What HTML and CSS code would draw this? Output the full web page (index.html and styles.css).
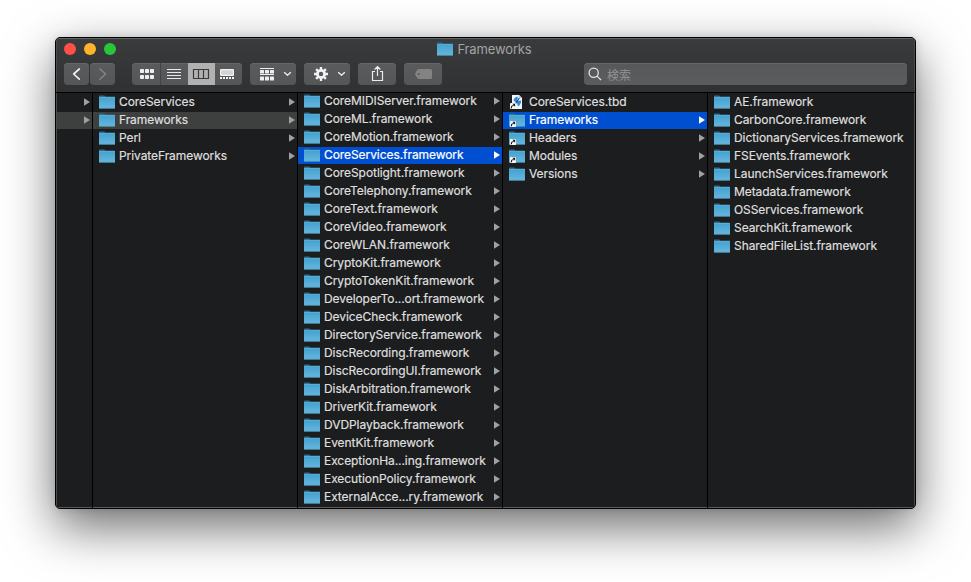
FILE: index.html
```html
<!DOCTYPE html>
<html lang="ja">
<head>
<meta charset="utf-8">
<title>Frameworks</title>
<link rel="stylesheet" href="styles.css">
</head>
<body>
<svg class="defs" aria-hidden="true">
  <defs>
    <linearGradient id="blue" x1="0" y1="0" x2="0" y2="1"><stop offset="0" stop-color="#43a1d0"/><stop offset="1" stop-color="#68b7dd"/></linearGradient>
    <symbol id="folder" viewBox="0 0 16 14">
      <path d="M0 1.2Q0 .4.8.4H5.2L6.6 1.4H15.4Q16 1.4 16 2V4H0Z" fill="#2e718e"/>
      <rect y="2.2" width="16" height="11.4" rx=".4" fill="url(#blue)"/>
      <path d="M0 2.5H16" stroke="#6cbce0" stroke-width=".6"/>
      <path d="M0 13.3H16" stroke="#478eae" stroke-width=".6"/>
    </symbol>
    <symbol id="alias" viewBox="0 0 7 7">
      <rect width="7" height="7" rx=".8" fill="#f4f4f4"/>
      <path d="M1.7 6V4.8Q1.7 3.2 4.3 2.9" fill="none" stroke="#111" stroke-width="1.3"/><path d="M2.8 1H6V4.3Z" fill="#111"/>
    </symbol>
    <symbol id="tri" viewBox="0 0 6 8"><path d="M0 .2L6 4L0 7.8Z" fill="currentColor"/></symbol>
    <symbol id="chev" viewBox="0 0 8 5"><path d="M1 .9L4 3.8L7 .9" fill="none" stroke="#e7e7e7" stroke-width="1.4" stroke-linecap="round" stroke-linejoin="round"/></symbol>
  </defs>
</svg>
<main class="window">
  <header class="chrome">
    <div class="titlebar">
      <div class="lights"><i class="red"></i><i class="yellow"></i><i class="green"></i></div>
      <div class="title"><svg class="folder"><use href="#folder"/></svg><span>Frameworks</span></div>
    </div>
    <div class="toolbar">
      <div class="nav">
        <button class="btn"><svg width="25" height="22"><path d="M15.3 6L9.7 11L15.3 16.2" fill="none" stroke="#f0f0f0" stroke-width="1.7" stroke-linecap="round" stroke-linejoin="round"/></svg></button>
        <button class="btn"><svg width="25" height="22"><path d="M10 6L15.6 11L10 16.2" fill="none" stroke="#858687" stroke-width="1.4" stroke-linecap="round" stroke-linejoin="round"/></svg></button>
      </div>
      <div class="views btn">
        <span class="seg sep"><svg width="28" height="22" fill="#efefef"><rect x="8" y="6" width="4" height="4" rx=".8"/><rect x="13" y="6" width="4" height="4" rx=".8"/><rect x="18" y="6" width="4" height="4" rx=".8"/><rect x="8" y="12" width="4" height="4" rx=".8"/><rect x="13" y="12" width="4" height="4" rx=".8"/><rect x="18" y="12" width="4" height="4" rx=".8"/></svg></span>
        <span class="seg"><svg width="27" height="22"><path d="M6 6.5H20M6 9.5H20M6 12.5H20M6 15.5H20" stroke="#e8e8e8"/></svg></span>
        <span class="seg on"><svg width="27" height="22"><path d="M5.5 6.5H20.5V15.5H5.5ZM10.5 6.5V15.5M15.5 6.5V15.5" fill="none" stroke="#3a3a3b" stroke-width="1.2"/></svg></span>
        <span class="seg"><svg width="27" height="22"><rect x="5.6" y="6.6" width="12.8" height="5.8" rx=".6" fill="#d2d2d2" stroke="#f3f3f3" stroke-width="1.2"/><path d="M5 15H19" stroke="#f3f3f3" stroke-width="2" stroke-dasharray="2 1"/></svg></span>
      </div>
      <button class="btn menu"><svg width="46" height="22"><path d="M10 5.5H24M10 11.5H24" stroke="#eee"/><g fill="#eee"><rect x="10" y="7" width="4" height="3.5" rx=".6"/><rect x="15" y="7" width="4" height="3.5" rx=".6"/><rect x="20" y="7" width="4" height="3.5" rx=".6"/><rect x="10" y="13.5" width="4" height="4" rx=".6"/><rect x="15" y="13.5" width="4" height="4" rx=".6"/><rect x="20" y="13.5" width="4" height="4" rx=".6"/></g><use href="#chev" x="33.5" y="8.5" width="8" height="5"/></svg></button>
      <button class="btn menu"><svg width="46" height="22"><g transform="translate(17 11)" fill="none" stroke="#f2f2f2"><circle r="3.6" stroke-width="2.8"/><path d="M0-7V-4M0 7V4M-7 0H-4M7 0H4M-4.9-4.9L-3-3M4.9 4.9L3 3M-4.9 4.9L-3 3M4.9-4.9L3-3" stroke-width="2.4"/></g><use href="#chev" x="33.5" y="8.5" width="8" height="5"/></svg></button>
      <button class="btn single"><svg width="38" height="22" fill="none" stroke="#ececec" stroke-width="1.2"><path d="M17 8.5H14.5V17.5H24.5V8.5H22M19.5 13V3.8M16.6 6.5L19.5 3.6L22.4 6.5"/></svg></button>
      <button class="btn single"><svg width="38" height="22"><path fill-rule="evenodd" d="M15.2 6H26.5Q28 6 28 7.5V14.5Q28 16 26.5 16H15.2Q14 16 13.2 15L11.4 12Q10.8 11 11.4 10L13.2 7Q14 6 15.2 6ZM14.7 9.9A1.1 1.1 0 1 0 14.7 12.1A1.1 1.1 0 1 0 14.7 9.9Z" fill="#838384"/></svg></button>
      <div class="search"><svg width="14" height="14" fill="none" stroke="#e3e3e3" stroke-width="1.3"><circle cx="5.7" cy="5.7" r="4.6"/><path d="M9.1 9.1L13 13"/></svg><span>検索</span></div>
    </div>
  </header>
  <section class="columns">
    <ul class="col c0">
      <li><svg class="tri"><use href="#tri"/></svg></li>
      <li class="path"><svg class="tri"><use href="#tri"/></svg></li>
    </ul>
    <ul class="col c1">
      <li><svg class="folder"><use href="#folder"/></svg><span>CoreServices</span><svg class="tri"><use href="#tri"/></svg></li>
      <li class="path"><svg class="folder"><use href="#folder"/></svg><span>Frameworks</span><svg class="tri"><use href="#tri"/></svg></li>
      <li><svg class="folder"><use href="#folder"/></svg><span>Perl</span><svg class="tri"><use href="#tri"/></svg></li>
      <li><svg class="folder"><use href="#folder"/></svg><span>PrivateFrameworks</span><svg class="tri"><use href="#tri"/></svg></li>
    </ul>
    <ul class="col c2">
      <li><svg class="folder"><use href="#folder"/></svg><span>CoreMIDIServer.framework</span><svg class="tri"><use href="#tri"/></svg></li>
      <li><svg class="folder"><use href="#folder"/></svg><span>CoreML.framework</span><svg class="tri"><use href="#tri"/></svg></li>
      <li><svg class="folder"><use href="#folder"/></svg><span>CoreMotion.framework</span><svg class="tri"><use href="#tri"/></svg></li>
      <li class="sel"><svg class="folder"><use href="#folder"/></svg><span>CoreServices.framework</span><svg class="tri"><use href="#tri"/></svg></li>
      <li><svg class="folder"><use href="#folder"/></svg><span>CoreSpotlight.framework</span><svg class="tri"><use href="#tri"/></svg></li>
      <li><svg class="folder"><use href="#folder"/></svg><span>CoreTelephony.framework</span><svg class="tri"><use href="#tri"/></svg></li>
      <li><svg class="folder"><use href="#folder"/></svg><span>CoreText.framework</span><svg class="tri"><use href="#tri"/></svg></li>
      <li><svg class="folder"><use href="#folder"/></svg><span>CoreVideo.framework</span><svg class="tri"><use href="#tri"/></svg></li>
      <li><svg class="folder"><use href="#folder"/></svg><span>CoreWLAN.framework</span><svg class="tri"><use href="#tri"/></svg></li>
      <li><svg class="folder"><use href="#folder"/></svg><span>CryptoKit.framework</span><svg class="tri"><use href="#tri"/></svg></li>
      <li><svg class="folder"><use href="#folder"/></svg><span>CryptoTokenKit.framework</span><svg class="tri"><use href="#tri"/></svg></li>
      <li><svg class="folder"><use href="#folder"/></svg><span>DeveloperTo...ort.framework</span><svg class="tri"><use href="#tri"/></svg></li>
      <li><svg class="folder"><use href="#folder"/></svg><span>DeviceCheck.framework</span><svg class="tri"><use href="#tri"/></svg></li>
      <li><svg class="folder"><use href="#folder"/></svg><span>DirectoryService.framework</span><svg class="tri"><use href="#tri"/></svg></li>
      <li><svg class="folder"><use href="#folder"/></svg><span>DiscRecording.framework</span><svg class="tri"><use href="#tri"/></svg></li>
      <li><svg class="folder"><use href="#folder"/></svg><span>DiscRecordingUI.framework</span><svg class="tri"><use href="#tri"/></svg></li>
      <li><svg class="folder"><use href="#folder"/></svg><span>DiskArbitration.framework</span><svg class="tri"><use href="#tri"/></svg></li>
      <li><svg class="folder"><use href="#folder"/></svg><span>DriverKit.framework</span><svg class="tri"><use href="#tri"/></svg></li>
      <li><svg class="folder"><use href="#folder"/></svg><span>DVDPlayback.framework</span><svg class="tri"><use href="#tri"/></svg></li>
      <li><svg class="folder"><use href="#folder"/></svg><span>EventKit.framework</span><svg class="tri"><use href="#tri"/></svg></li>
      <li><svg class="folder"><use href="#folder"/></svg><span>ExceptionHa...ing.framework</span><svg class="tri"><use href="#tri"/></svg></li>
      <li><svg class="folder"><use href="#folder"/></svg><span>ExecutionPolicy.framework</span><svg class="tri"><use href="#tri"/></svg></li>
      <li><svg class="folder"><use href="#folder"/></svg><span>ExternalAcce...ry.framework</span><svg class="tri"><use href="#tri"/></svg></li>
    </ul>
    <ul class="col c3">
      <li><svg class="folder" viewBox="0 0 16 14"><path d="M3 0H10L13 3V14H3Z" fill="#f3f6f8"/><path d="M10 0V3H13Z" fill="#b9c3ca"/><path d="M4.5 5.5Q5 2 9 1.5L8 6L12 5.5Q12.5 9 9 11.5L8 8Z" fill="#2b8be0"/><path d="M10.3 3L6 9.5" stroke="#1c3f6b" stroke-width="1.1"/><use href="#alias" x="1" y="8" width="6" height="6"/></svg><span>CoreServices.tbd</span></li>
      <li class="sel"><svg class="folder" viewBox="0 0 16 14"><use href="#folder" width="16" height="14"/><use href="#alias" x="1" y="8" width="6" height="6"/></svg><span>Frameworks</span><svg class="tri"><use href="#tri"/></svg></li>
      <li><svg class="folder" viewBox="0 0 16 14"><use href="#folder" width="16" height="14"/><use href="#alias" x="1" y="8" width="6" height="6"/></svg><span>Headers</span><svg class="tri"><use href="#tri"/></svg></li>
      <li><svg class="folder" viewBox="0 0 16 14"><use href="#folder" width="16" height="14"/><use href="#alias" x="1" y="8" width="6" height="6"/></svg><span>Modules</span><svg class="tri"><use href="#tri"/></svg></li>
      <li><svg class="folder"><use href="#folder"/></svg><span>Versions</span><svg class="tri"><use href="#tri"/></svg></li>
    </ul>
    <ul class="col c4">
      <li><svg class="folder"><use href="#folder"/></svg><span>AE.framework</span></li>
      <li><svg class="folder"><use href="#folder"/></svg><span>CarbonCore.framework</span></li>
      <li><svg class="folder"><use href="#folder"/></svg><span>DictionaryServices.framework</span></li>
      <li><svg class="folder"><use href="#folder"/></svg><span>FSEvents.framework</span></li>
      <li><svg class="folder"><use href="#folder"/></svg><span>LaunchServices.framework</span></li>
      <li><svg class="folder"><use href="#folder"/></svg><span>Metadata.framework</span></li>
      <li><svg class="folder"><use href="#folder"/></svg><span>OSServices.framework</span></li>
      <li><svg class="folder"><use href="#folder"/></svg><span>SearchKit.framework</span></li>
      <li><svg class="folder"><use href="#folder"/></svg><span>SharedFileList.framework</span></li>
    </ul>
  </section>
</main>
</body>
</html>
```
FILE: styles.css
```css
* { box-sizing: border-box; }
html, body { margin: 0; height: 100%; overflow: hidden; background: #fff; }
body { padding: 37px 55px; font-family: Inter, "Noto Sans CJK JP", sans-serif; font-size: 12px; color: #dfdfdf; }
.defs { position: absolute; width: 0; height: 0; }
svg { display: block; flex: none; }

.window {
  width: 861px;
  height: 472px;
  border: 1px solid #000;
  border-radius: 5px;
  overflow: hidden;
  background: #1c1d1e;
  box-shadow: 0 18px 50px rgba(0, 0, 0, .58), 0 0 10px rgba(0, 0, 0, .12);
  display: flex;
  flex-direction: column;
}
.chrome {
  height: 55px;
  flex: none;
  background: linear-gradient(#3a3b3c, #303132);
  border-bottom: 1px solid #000;
  box-shadow: inset 0 1px #626364, inset 1px 0 #4b4c4d, inset -1px 0 #4b4c4d;
}
.titlebar { height: 25px; display: grid; grid-template-columns: 1fr auto 1fr; align-items: center; padding: 0 10px 0 8px; }
.lights { display: flex; gap: 8px; margin-top: -3px; }
.lights i { width: 12px; height: 12px; border-radius: 50%; }
.red { background: #fe4f49; }
.yellow { background: #fdb42b; }
.green { background: #27c739; }
.title { display: flex; align-items: center; gap: 4px; color: #a4a5a6; font-size: 13px; letter-spacing: -.13px; margin-top: -4px; }
.toolbar { display: flex; padding: 0 8px; }
.btn { height: 22px; padding: 0; border: 0; border-radius: 4px; background: linear-gradient(#5a5b5c, #555657); box-shadow: inset 0 1px #656667; display: block; flex: none; overflow: hidden; }
.nav { display: flex; gap: 1px; margin-right: 17px; }
.views { display: flex; width: 110px; margin-right: 8px; }
.seg { width: 27px; height: 22px; flex: none; }
.seg.sep { width: 29px; border-right: 1px solid #434445; }
.seg.on { background: #b1b1b2; }
.menu { width: 46px; margin-right: 8px; }
.single { width: 38px; margin-right: 8px; }
.search { margin-left: 134px; flex: 1; height: 22px; border-radius: 4px; background: linear-gradient(#575859, #5b5c5d); box-shadow: inset 0 1px #666768; display: flex; align-items: center; padding-left: 4px; gap: 5px; color: #919293; }

.columns { flex: 1; display: flex; min-height: 0; box-shadow: inset 1px 0 #4b4c4d, inset -1px 0 #4b4c4d, inset 0 -1px #58595a; }
.col { list-style: none; margin: 0; padding: 1px 0 0; border-right: 1px solid #000; flex: none; overflow: hidden; }
.c0 { width: 37px; padding-left: 1px; }
.c1, .c2, .c3 { width: 205px; }
.c2 { padding-top: 0; }
.c4 { flex: 1; border: 0; }
.col li { height: 17px; margin-bottom: 1px; padding: 0 2px 0 6px; display: flex; align-items: center; }
.c0 li, .c1 li, .c3 li, .c4 li { position: static; }
.col span { margin: -2px 0 0 4px; line-height: 17px; white-space: nowrap; letter-spacing: -.07px; -webkit-text-stroke: .2px currentColor; }
.folder { width: 16px; height: 14px; }
.col .folder { margin-top: -1px; }
.tri { width: 6px; height: 8px; margin: -1px 0 0 auto; color: #a0a1a2; }
.path { background: #3e3f3f; }
.sel { background: #004fd0; color: #fff; }
.sel .tri { color: #fff; }
```
